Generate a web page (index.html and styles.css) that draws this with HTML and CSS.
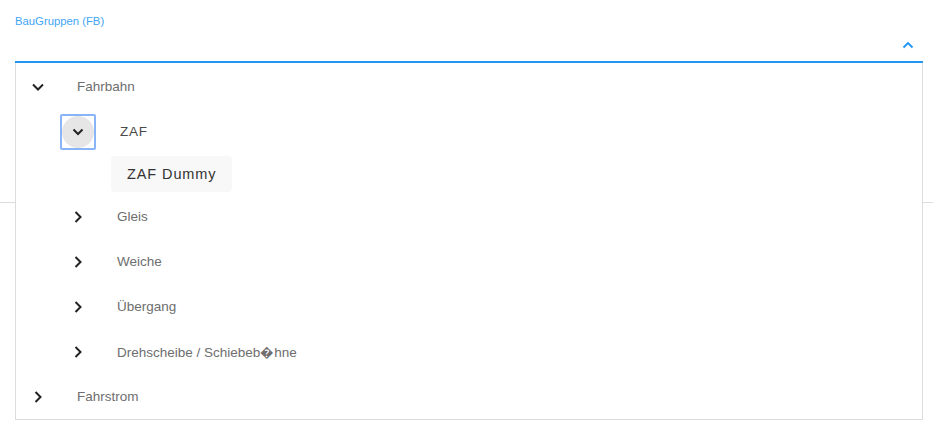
FILE: index.html
```html
<!DOCTYPE html>
<html lang="de">
<head>
<meta charset="utf-8">
<title>BauGruppen</title>
<link rel="stylesheet" href="styles.css">
</head>
<body>
<div class="page">
<div class="field">
  <label class="field-label">BauGruppen (FB)</label>
  <div class="field-input">
    <svg class="caret-up" width="12" height="8" viewBox="0 0 12 8"><path d="M1.5 6.5 L6 2 L10.5 6.5" fill="none" stroke="#2196f3" stroke-width="1.8"/></svg>
  </div>
  <div class="panel">
    <div class="row lvl1">
      <span class="toggle"><svg width="12" height="8" viewBox="0 0 12 8"><path d="M1 1.5 L6 6.5 L11 1.5" fill="none" stroke="#222" stroke-width="2"/></svg></span>
      <span class="text">Fahrbahn</span>
    </div>
    <div class="row lvl2">
      <span class="toggle"><span class="focus"><span class="circle"><svg width="12" height="8" viewBox="0 0 12 8"><path d="M1.5 1.5 L6 6 L10.5 1.5" fill="none" stroke="#222" stroke-width="2"/></svg></span></span></span>
      <span class="text spaced">ZAF</span>
    </div>
    <div class="row leaf">
      <span class="leaf-box">ZAF Dummy</span>
    </div>
    <div class="row lvl2">
      <span class="toggle"><svg width="8" height="12" viewBox="0 0 8 12"><path d="M1.5 1 L6.5 6 L1.5 11" fill="none" stroke="#222" stroke-width="2"/></svg></span>
      <span class="text">Gleis</span>
    </div>
    <div class="row lvl2">
      <span class="toggle"><svg width="8" height="12" viewBox="0 0 8 12"><path d="M1.5 1 L6.5 6 L1.5 11" fill="none" stroke="#222" stroke-width="2"/></svg></span>
      <span class="text">Weiche</span>
    </div>
    <div class="row lvl2">
      <span class="toggle"><svg width="8" height="12" viewBox="0 0 8 12"><path d="M1.5 1 L6.5 6 L1.5 11" fill="none" stroke="#222" stroke-width="2"/></svg></span>
      <span class="text">Übergang</span>
    </div>
    <div class="row lvl2">
      <span class="toggle"><svg width="8" height="12" viewBox="0 0 8 12"><path d="M1.5 1 L6.5 6 L1.5 11" fill="none" stroke="#222" stroke-width="2"/></svg></span>
      <span class="text">Drehscheibe / Schiebeb&#xFFFD;hne</span>
    </div>
    <div class="row lvl1">
      <span class="toggle"><svg width="8" height="12" viewBox="0 0 8 12"><path d="M1.5 1 L6.5 6 L1.5 11" fill="none" stroke="#222" stroke-width="2"/></svg></span>
      <span class="text">Fahrstrom</span>
    </div>
  </div>
</div>
<div class="under-field"></div>
</div>
</body>
</html>
```

FILE: styles.css
```css
html, body {
  margin: 0;
  padding: 0;
  background: #fff;
  font-family: "Liberation Sans", Arial, sans-serif;
}

.page {
  min-height: 443px;
}

.field {
  position: relative;
  z-index: 2;
  margin: 0 10px 0 15px;
  padding-top: 14px;
}

.field-label {
  display: block;
  font-size: 11.3px;
  line-height: 14px;
  color: #42a5f5;
}

.field-input {
  height: 33px;
  border-bottom: 2px solid #2196f3;
  display: flex;
  align-items: center;
  justify-content: flex-end;
  padding-right: 9px;
}

.caret-up {
  display: block;
}

.under-field {
  position: relative;
  z-index: 1;
  height: 139px;
  border-bottom: 1px solid #dcdcdc;
}

.panel {
  position: absolute;
  top: 100%;
  left: 0;
  right: 0;
  z-index: 3;
  background: #fff;
  border: 1px solid #dcdcdc;
  border-top: none;
  padding-top: 1px;
}

.row {
  display: flex;
  align-items: center;
  height: 45px;
}

.row.leaf {
  height: 40px;
  padding-left: 95px;
}

.row.lvl2 {
  padding-left: 40px;
}

.toggle {
  width: 44px;
  height: 44px;
  margin-right: 17px;
  display: flex;
  align-items: center;
  justify-content: center;
  flex: none;
}

.toggle svg {
  display: block;
}

.focus {
  width: 32px;
  height: 32px;
  border: 2px solid #8ab4f8;
  border-radius: 2px;
  display: flex;
  align-items: center;
  justify-content: center;
}

.circle {
  width: 32px;
  height: 32px;
  border-radius: 50%;
  background: #e6e6e6;
  display: flex;
  align-items: center;
  justify-content: center;
}

.text {
  font-size: 13.5px;
  color: #6e6e6e;
  white-space: nowrap;
}

.text.spaced {
  margin-left: 3px;
  letter-spacing: 0.8px;
  color: #4a4a4a;
}

.leaf-box {
  display: flex;
  align-items: center;
  height: 36px;
  padding: 0 16px;
  background: #f8f8f8;
  border-radius: 4px;
  font-size: 14.5px;
  letter-spacing: 0.9px;
  color: #333;
}
```
